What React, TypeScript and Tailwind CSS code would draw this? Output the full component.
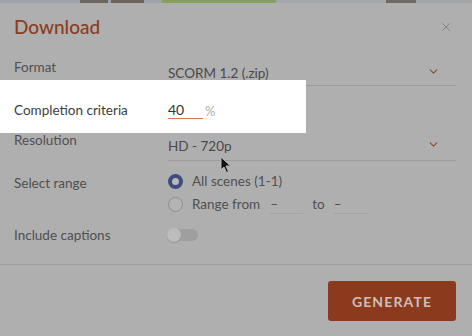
import { X, ChevronDown } from 'lucide-react';

const STRIP = [
  { w: 80, c: '#9ea2aa' },
  { w: 28, c: '#6e6660' },
  { w: 3, c: '#9ea2aa' },
  { w: 33, c: '#6b625c' },
  { w: 18, c: '#9ea2aa' },
  { w: 114, c: '#86a062' },
  { w: 110, c: '#a3a7ae' },
  { w: 30, c: '#6f6a66' },
  { w: 56, c: '#a0a4ab' },
];

function Radio({ checked }: { checked?: boolean }) {
  return checked ? (
    <span className="w-[15px] h-[15px] rounded-full border-[4px] border-[#3e4c7e] bg-[#b9b9bb] shrink-0" />
  ) : (
    <span className="w-[15px] h-[15px] rounded-full border border-[#8d8d8d] bg-[#b3b3b3] shrink-0" />
  );
}

export default function App() {
  return (
    <div className="relative w-[472px] h-[336px] overflow-hidden bg-[#afafaf] font-['Lato','Noto_Sans',sans-serif] text-[#505050]">
      {/* background peeking above the dialog */}
      <div className="flex h-[3px]">
        {STRIP.map((s, i) => (
          <div key={i} style={{ width: s.w, backgroundColor: s.c }} />
        ))}
      </div>

      {/* Header */}
      <div className="flex items-center justify-between h-[47px] pl-[14px] pr-[19px]">
        <h1 className="text-[19px] font-medium text-[#8b3d21] leading-[28px]">Download</h1>
        <X className="w-[14px] h-[14px] text-[#7e7e7e]" strokeWidth={1.5} />
      </div>

      <div className="px-[14px]">
        {/* Format */}
        <div className="flex h-[36px]">
          <div className="w-[154px] pt-[7px] text-[13.5px] leading-[20px]">Format</div>
          <div className="flex-1 mr-[2px] h-[36px] border-b border-[#9b9b9b] pt-[13px] flex justify-between">
            <span className="text-[13.5px] leading-[20px] text-[#4a4a4a]">SCORM 1.2 (.zip)</span>
            <ChevronDown className="w-[13px] h-[13px] text-[#8c4a31] mt-[2px] mr-[16px]" strokeWidth={2} />
          </div>
        </div>

        {/* Completion criteria (spotlighted) */}
        <div className="relative flex items-center h-[44px] pt-[4px]">
          <div className="absolute -left-[14px] -top-[6px] w-[306px] h-[53px] bg-white" />
          <div className="relative w-[154px] text-[13.5px] leading-[20px] text-[#3d3d3d]">Completion criteria</div>
          <div className="relative flex items-end">
            <span className="w-[35px] border-b-[1.5px] border-[#e0714e] text-[14px] leading-[16px] text-[#333]">40</span>
            <span className="ml-[2px] text-[13px] leading-[16px] text-[#b0b0b0]">%</span>
          </div>
        </div>

        {/* Resolution */}
        <div className="flex h-[31px]">
          <div className="w-[154px] text-[13.5px] leading-[20px]">Resolution</div>
          <div className="flex-1 mr-[2px] h-[31px] border-b border-[#9b9b9b] pt-[6px] flex justify-between">
            <span className="text-[13.5px] leading-[20px] text-[#4a4a4a]">HD - 720p</span>
            <ChevronDown className="w-[13px] h-[13px] text-[#8c4a31] mt-[2px] mr-[16px]" strokeWidth={2} />
          </div>
        </div>

        {/* Select range */}
        <div className="flex pt-[9px]">
          <div className="w-[154px] mt-[3px] text-[13.5px] leading-[20px]">Select range</div>
          <div className="flex flex-col text-[13.5px]">
            <div className="flex items-center h-[23px]">
              <Radio checked />
              <span className="ml-[9px]">All scenes (1-1)</span>
            </div>
            <div className="flex items-center h-[23px]">
              <Radio />
              <span className="ml-[9px] mr-[10px]">Range from</span>
              <span className="w-[33px] border-b border-[#a3a3a3] leading-[18px]">–</span>
              <span className="mx-[9px]">to</span>
              <span className="w-[34px] border-b border-[#a3a3a3] leading-[18px]">–</span>
            </div>
          </div>
        </div>

        {/* Include captions */}
        <div className="flex items-center h-[38px]">
          <div className="w-[154px] text-[13.5px] leading-[20px]">Include captions</div>
          <div className="relative w-[30px] h-[12px] rounded-full bg-[#9f9f9f]">
            <span className="absolute -left-[1px] -top-[1px] w-[14px] h-[14px] rounded-full bg-[#bcbcbc] shadow-[0_1px_1px_rgba(0,0,0,0.15)]" />
          </div>
        </div>
      </div>

      {/* Footer */}
      <div className="mt-[10px] border-t border-[#9d9d9d] flex justify-end pt-[16px] pr-[16px]">
        <button className="w-[128px] h-[40px] rounded-[3px] bg-[#8c3a1d] text-[#cbc0b8] text-[14px] font-bold tracking-[0.08em]">
          GENERATE
        </button>
      </div>

      {/* mouse cursor */}
      <svg className="absolute left-[220px] top-[156px]" width="12" height="18" viewBox="0 0 12 18">
        <path d="M1 1 L1 14 L4 11 L6.5 16.5 L8.5 15.5 L6 10 L10.5 10 Z" fill="#111" stroke="#b8b8b8" strokeWidth="1" />
      </svg>
    </div>
  );
}
